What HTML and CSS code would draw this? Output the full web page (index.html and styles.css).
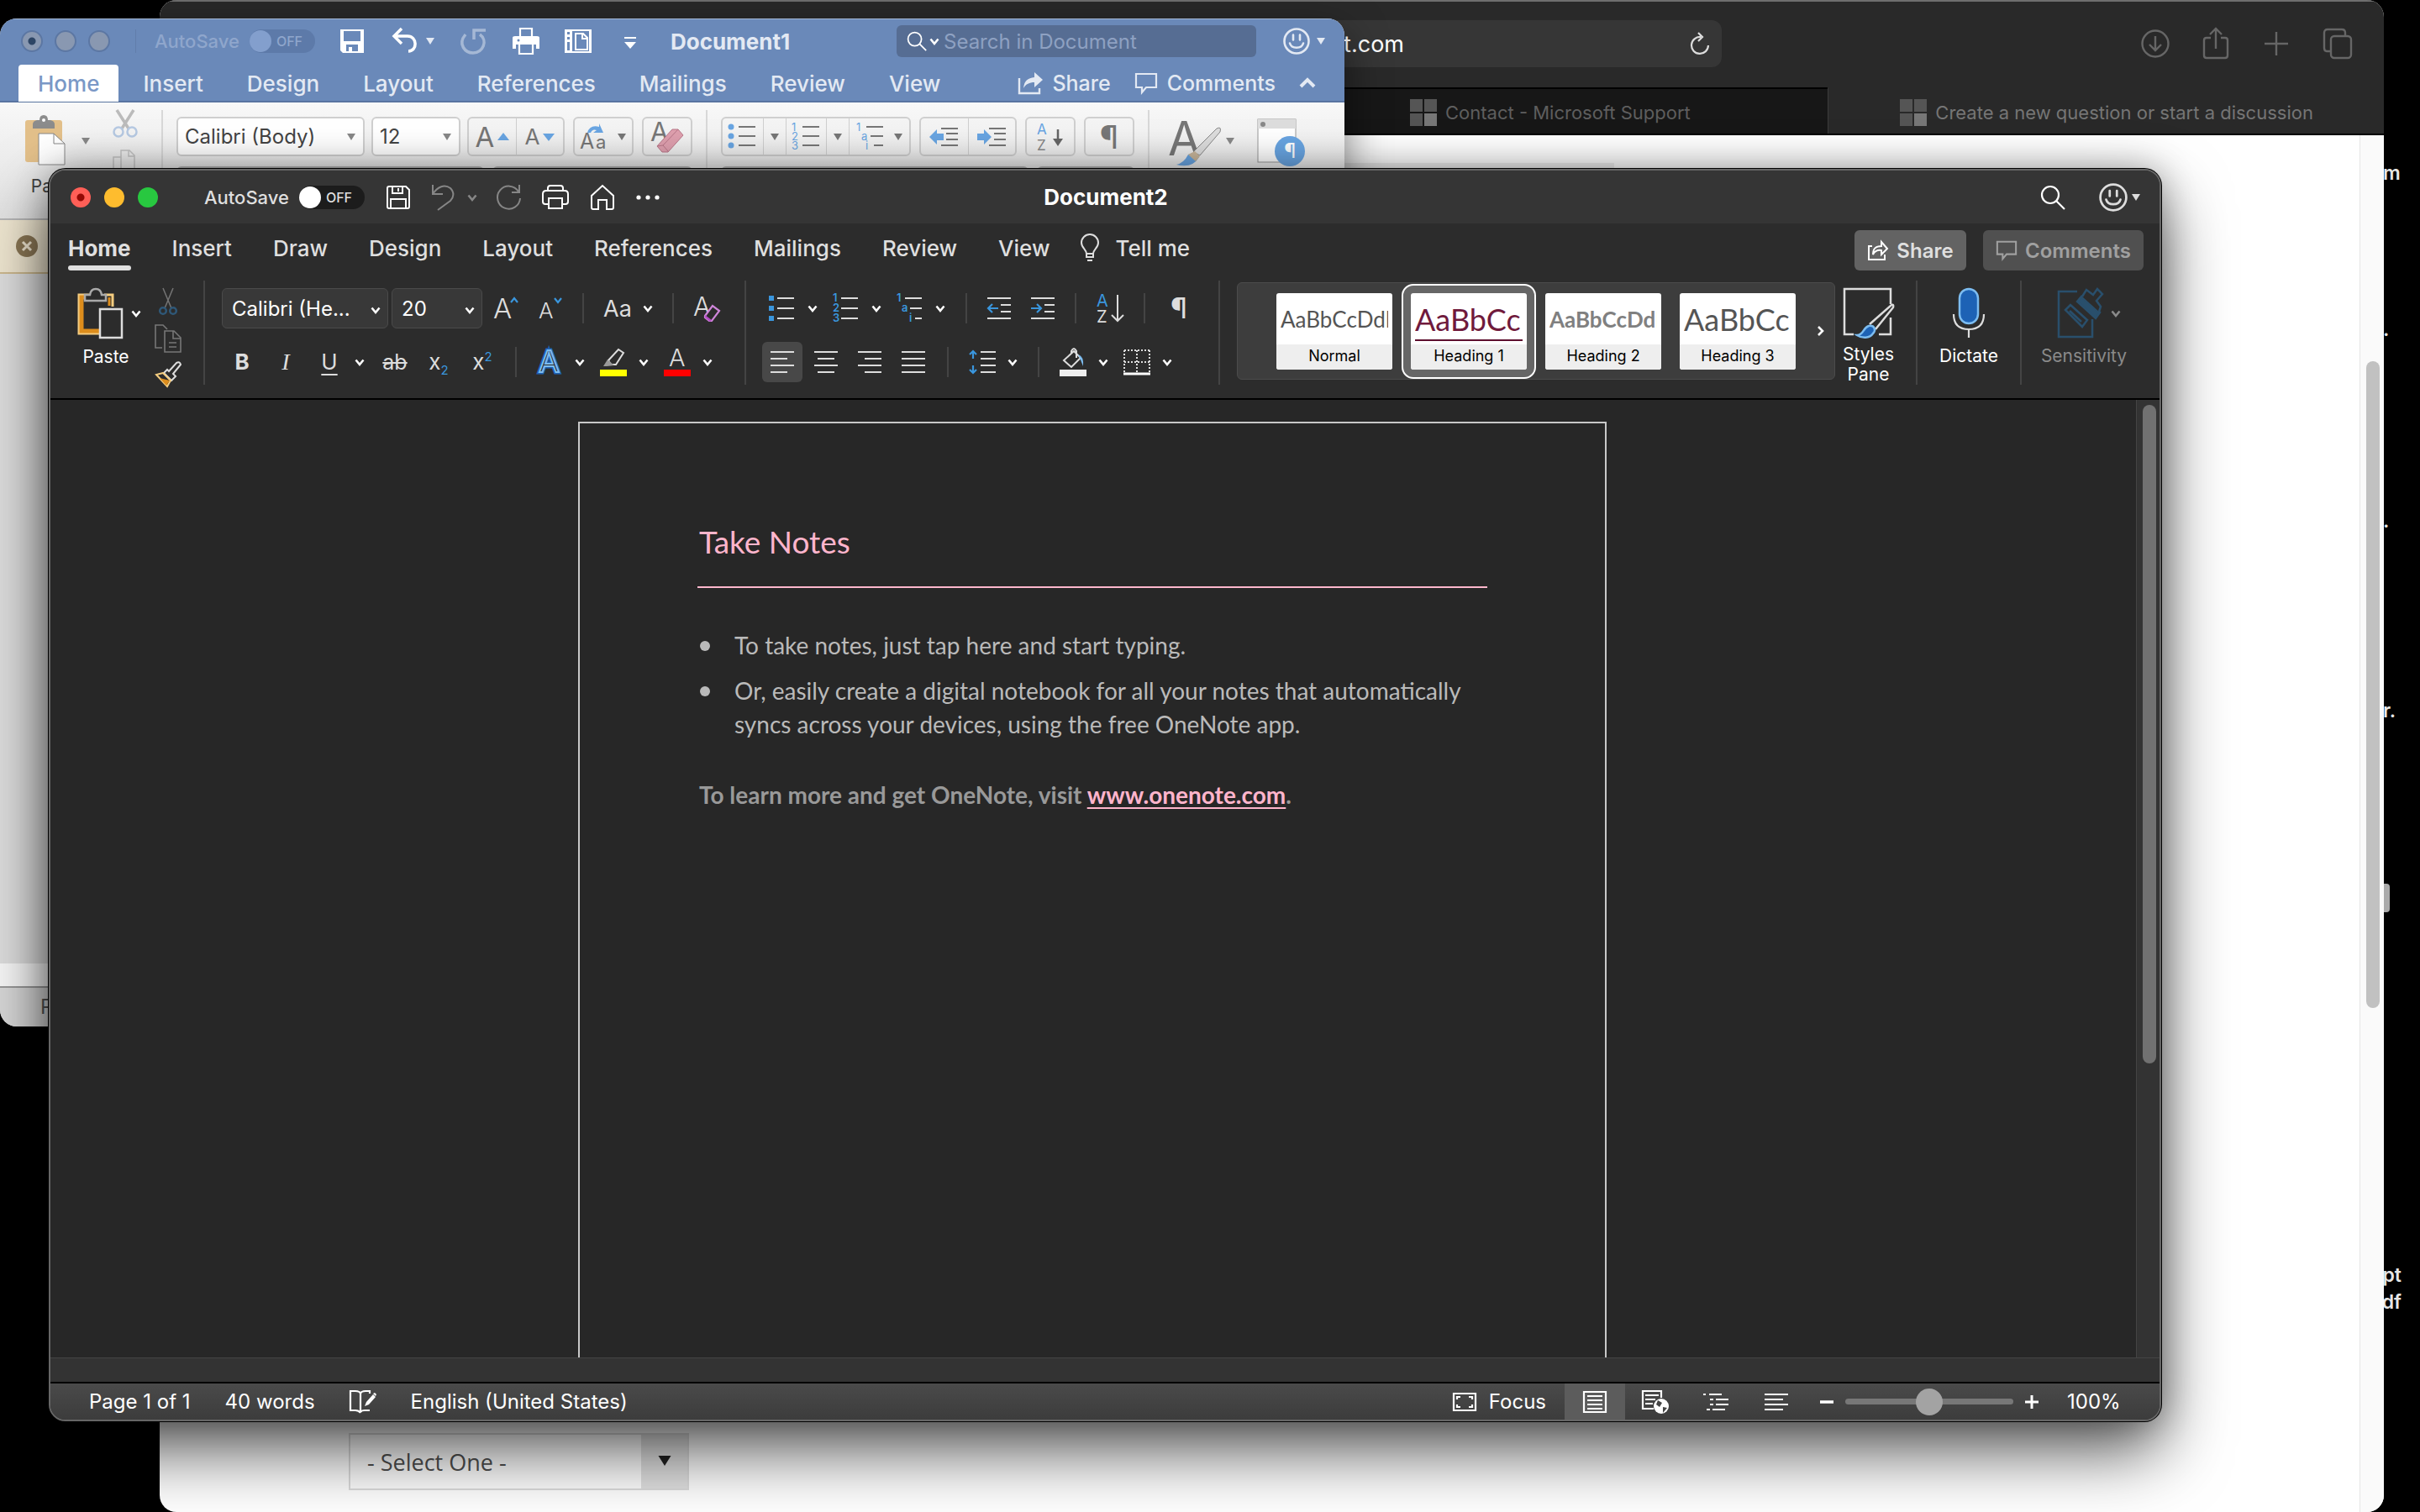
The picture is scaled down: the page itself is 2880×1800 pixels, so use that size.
FILE: index.html
```html
<!DOCTYPE html>
<html lang="en">
<head>
  <meta charset="UTF-8">
  <title>Document2</title>
  <link rel="stylesheet" href="styles.css">
</head>
<body>
  <!-- shared icons -->
  <svg class="sprite">
    <symbol id="chev" viewBox="0 0 12 12"><path d="M1.500 3.500 6 9l4.500-5.500" fill="none" stroke="currentColor" stroke-width="2.600"/></symbol>
    <symbol id="caret" viewBox="0 0 12 12"><path d="M1 2h10L6 10z" fill="currentColor"/></symbol>
    <symbol id="smile" viewBox="0 0 32 32"><g fill="none" stroke="currentColor" stroke-width="2.600"><circle cx="16" cy="16" r="14.500"/><path d="M12 8.500v6M20 8.500v6M8 18.500c2 7 14 7 16 0" stroke-linecap="round"/></g></symbol>
    <symbol id="ms" viewBox="0 0 34 34"><path d="M1 1h15v15H1zM18 1h15v15H18zM1 18h15v15H1z" fill="#555"/><path d="M18 18h15v15H18z" fill="#777"/></symbol>
    <symbol id="search" viewBox="0 0 30 30"><g fill="none" stroke="currentColor" stroke-width="2.200"><circle cx="12" cy="12" r="10"/><path d="m19 19 10 10"/></g></symbol>
    <symbol id="comment" viewBox="0 0 28 28"><path d="M2 3h24v16H14l-5 6v-6H2z" fill="none" stroke="currentColor" stroke-width="2.200"/></symbol>
  </svg>

  <main class="desktop">
    <ul class="files">
      <li class="file f1">m</li>
      <li class="file f2">.</li>
      <li class="file f3">.</li>
      <li class="file f4">r.</li>
      <li class="file f5"></li>
      <li class="file f6">pt<br>df</li>
    </ul>

    <!-- browser window -->
    <section class="window safari">
      <div class="safari-bar">
        <div class="address"><span>microsoft.com</span>
          <button aria-label="Reload"><svg width="24" height="28" viewBox="0 0 24 28"><path d="M13 6a10 10 0 1 0 9 10M10 1l5 5-5 5" fill="none" stroke="#ddd" stroke-width="2.200"/></svg></button>
        </div>
        <div class="safari-tools">
          <button aria-label="Downloads"><svg width="36" height="36" viewBox="0 0 36 36"><g class="ln"><circle cx="18" cy="18" r="15.500"/><path d="M18 9v17M11 19l7 7 7-7"/></g></svg></button>
          <button aria-label="Share page"><svg width="36" height="40" viewBox="0 0 36 40"><g class="ln"><path d="M12 13H7q-3 0-3 3v18q0 3 3 3h22q3 0 3-3V16q0-3-3-3h-5M18 26V3M11 9l7-7 7 7"/></g></svg></button>
          <button aria-label="New tab"><svg width="36" height="36" viewBox="0 0 36 36"><path class="ln" d="M18 4v28M4 18h28"/></svg></button>
          <button aria-label="Show tabs"><svg width="38" height="38" viewBox="0 0 38 38"><g class="ln"><rect x="11" y="10" width="24" height="26" rx="4"/><path d="M10 28H6q-3 0-3-4V6q0-4 4-4h17q4 0 4 4v3"/></g></svg></button>
        </div>
      </div>
      <div class="safari-tabs">
        <div class="stab"></div>
        <div class="stab"></div>
        <div class="stab"><svg width="34" height="34"><use href="#ms"/></svg>Contact - Microsoft Support</div>
        <div class="stab on"><svg width="34" height="34"><use href="#ms"/></svg>Create a new question or start a discussion</div>
      </div>
      <div class="web">
        <div class="web-page">
          <div class="web-strip"></div>
          <div class="web-select">
            <select aria-label="Product"><option>- Select One -</option></select>
            <svg width="18" height="18"><use href="#caret"/></svg>
          </div>
        </div>
        <div class="web-scroll"><div class="thumb"></div></div>
      </div>
    </section>

    <!-- light document window -->
    <section class="window doc1">
      <div class="d1-head">
        <div class="d1-title">
          <div class="lights dim"><i class="dot"></i><i></i><i></i></div>
          <label class="autosave">AutoSave<span class="toggle"><input type="checkbox">OFF</span></label>
          <div class="d1-quick">
            <button aria-label="Save"><svg width="32" height="32" viewBox="0 0 32 32"><path fill-rule="evenodd" fill="#fff" d="M1 2h28v28H4l-3-3zM5 4v12h20V4zM8 20v8h3v-5h4v5h7v-8z"/></svg></button>
            <button class="undo" aria-label="Undo"><svg width="32" height="32" viewBox="0 0 32 32"><path d="M3 10h16c12 0 12 18 1 18M12 1 3 10l9 9" fill="none" stroke="#fff" stroke-width="3.500"/></svg><svg width="12" height="12"><use href="#caret"/></svg></button>
            <button aria-label="Redo" class="faded"><svg width="32" height="32" viewBox="0 0 32 32"><path d="M6 8c-10 12 0 22 9 22 12 0 18-15 8-22M16 14V3h14" fill="none" stroke="#fff" stroke-width="3.500"/></svg></button>
            <button aria-label="Print"><svg width="32" height="32" viewBox="0 0 32 32"><path fill="#fff" d="M0 12q0-2 3-2h26q3 0 3 2v13h-4v-5H4v5H0z"/><path fill="#6a89b9" stroke="#fff" stroke-width="2.200" d="M9 10V1h14v9M8 19h16v12H8z"/><circle cx="7" cy="15" r="1.500" fill="#6a89b9"/></svg></button>
            <button aria-label="Page layout"><svg width="32" height="32" viewBox="0 0 32 32"><path fill-rule="evenodd" fill="#fff" d="M0 2h32v28H0zM9 4v24h20V4z"/><path fill="#6a89b9" d="M3 5h3v3H3zM3 11h3v3H3zM3 17h3v10H3z"/><path fill="none" stroke="#fff" stroke-width="2" d="M13 7h9l5 5v14H13zM21 7v6h6"/></svg></button>
            <button aria-label="Customize toolbar"><svg width="32" height="32" viewBox="0 0 32 32"><path fill="#fff" d="M9 11h14v2H9zM9 17h14l-7 8z"/></svg></button>
          </div>
          <h2>Document1</h2>
          <label class="d1-search"><svg width="24" height="24"><use href="#search"/></svg><svg width="12" height="12"><use href="#chev"/></svg><input type="text" placeholder="Search in Document" aria-label="Search in Document"></label>
          <button class="face" aria-label="Feedback"><svg width="32" height="32"><use href="#smile"/></svg><svg width="12" height="12"><use href="#caret"/></svg></button>
        </div>
        <nav class="d1-tabs">
          <button class="on">Home</button><button>Insert</button><button>Design</button><button>Layout</button><button>References</button><button>Mailings</button><button>Review</button><button>View</button>
          <div class="d1-actions">
            <button><svg width="30" height="28" viewBox="0 0 30 28"><path d="M2 8v18h24v-6" fill="none" stroke="currentColor" stroke-width="2.400"/><path fill="currentColor" d="M7 20c1-9 5-12 13-13V1l10 9-10 9v-6c-6 0-10 2-13 7z"/></svg>Share</button>
            <button><svg width="28" height="28"><use href="#comment"/></svg>Comments</button>
            <button aria-label="Collapse ribbon"><svg width="20" height="20" viewBox="0 0 20 20"><path d="m2 14 8-8 8 8" fill="none" stroke="currentColor" stroke-width="4"/></svg></button>
          </div>
        </nav>
      </div>
      <div class="d1-ribbon">
        <div class="d1-paste">
          <button aria-label="Paste"><svg width="48" height="60" viewBox="0 0 48 60"><rect x="0" y="6" width="44" height="50" rx="3" fill="#e3c08a"/><path fill="#8c8c8c" d="M9 16v-5q0-4 5-5h3q0-6 5-6t5 6h3q5 1 5 5v5z"/><circle cx="22" cy="6" r="2" fill="#fff"/><path d="M16 22h18l13 12v25H16z" fill="#fff" stroke="#888"/><path d="M34 22v12h13" fill="none" stroke="#888"/></svg></button>
          <span>Paste</span>
        </div>
        <svg class="d1-pcaret" width="12" height="12"><use href="#caret"/></svg>
        <div class="d1-clip">
          <svg width="30" height="34" viewBox="0 0 30 34"><path d="M5 1l14 22M25 1 11 23" stroke="#bbb" stroke-width="3.500"/><g fill="none" stroke="#b6c9e2" stroke-width="2.500"><circle cx="7" cy="27" r="5.500"/><circle cx="23" cy="27" r="5.500"/></g></svg>
          <svg width="28" height="32" viewBox="0 0 28 32"><path d="M1 9h9v22H1zM10 1h10l6 6v16H10zM19 1v7h7" fill="none" stroke="#c4c4c4" stroke-width="1.500"/></svg>
        </div>
        <i class="d1-vr"></i>
        <div class="d1-rows">
          <div class="d1-row">
            <div class="d1-combo c-font"><select aria-label="Font"><option>Calibri (Body)</option></select><svg width="12" height="12"><use href="#caret"/></svg></div>
            <div class="d1-combo c-size"><select aria-label="Font size"><option>12</option></select><svg width="12" height="12"><use href="#caret"/></svg></div>
            <div class="d1-set">
              <button aria-label="Increase font size"><span class="big-a">A</span><svg width="14" height="12" viewBox="0 0 14 12"><path d="m7 1 7 9H0z" fill="#69a5e2"/></svg></button>
              <button aria-label="Decrease font size"><span class="small-a">A</span><svg width="14" height="12" viewBox="0 0 14 12"><path d="m7 11 7-9H0z" fill="#69a5e2"/></svg></button>
            </div>
            <div class="d1-set"><button class="w72" aria-label="Change case"><svg width="34" height="34" viewBox="0 0 34 34"><text x="0" y="31" class="glyph" font-size="25">A</text><text x="19" y="31" class="glyph" font-size="22">a</text><path d="M9 12Q12 2 23 5V1l5 11H16l4-3q-5-2-7 3z" fill="#69a5e2"/></svg><svg width="12" height="12"><use href="#caret"/></svg></button></div>
            <div class="d1-set"><button aria-label="Clear formatting"><svg width="42" height="42" viewBox="0 0 42 42"><text x="1" y="26" class="glyph" font-size="31">A</text><path d="M9 32 27 12h7l6 7-18 20h-7z" fill="#dfa0af" stroke="#b97889"/><path d="m9 32 7-1 6 7M16 31l18-19" fill="none" stroke="#b97889"/></svg></button></div>
          </div>
          <div class="d1-row low"><i class="s1"></i><i class="s2"></i></div>
        </div>
        <i class="d1-vr"></i>
        <div class="d1-rows">
          <div class="d1-row">
            <div class="d1-set lists">
              <button aria-label="Bullets"><svg width="36" height="34" viewBox="0 0 36 34"><g fill="#69a5e2"><circle cx="4" cy="5" r="3.500"/><circle cx="4" cy="16" r="3.500"/><circle cx="4" cy="27" r="3.500"/></g><path d="M13 5h20M13 16h20M13 27h20" stroke="#777" stroke-width="2"/></svg></button>
              <button class="nar" aria-label="Bullet options"><svg width="12" height="12"><use href="#caret"/></svg></button>
              <button aria-label="Numbering"><svg width="36" height="34" viewBox="0 0 36 34"><g fill="#69a5e2" font-size="13"><text x="0" y="10">1</text><text x="0" y="21">2</text><text x="0" y="32">3</text></g><path d="M13 5h20M13 16h20M13 27h20" stroke="#777" stroke-width="2"/></svg></button>
              <button class="nar" aria-label="Numbering options"><svg width="12" height="12"><use href="#caret"/></svg></button>
              <button class="multi" aria-label="Multilevel list"><svg width="36" height="34" viewBox="0 0 36 34"><g fill="#69a5e2" font-size="13"><text x="0" y="10">1</text><text x="6" y="21">a</text><text x="11" y="32">i</text></g><path d="M12 5h20M17 16h15M21 27h11" stroke="#777" stroke-width="2"/></svg><svg width="12" height="12"><use href="#caret"/></svg></button>
            </div>
            <div class="d1-set">
              <button aria-label="Decrease indent"><svg width="36" height="28" viewBox="0 0 36 28"><path d="M0 14 9 5v5h8v8H9v5z" fill="#69a5e2"/><path d="M14 4h20M20 10h14M20 17h14M14 24h20" stroke="#777" stroke-width="2"/></svg></button>
              <button aria-label="Increase indent"><svg width="36" height="28" viewBox="0 0 36 28"><path d="M17 14 8 5v5H0v8h8v5z" fill="#69a5e2"/><path d="M14 4h20M20 10h14M20 17h14M14 24h20" stroke="#777" stroke-width="2"/></svg></button>
            </div>
            <div class="d1-set"><button aria-label="Sort"><svg width="34" height="36" viewBox="0 0 34 36"><text x="1" y="15" font-size="17" fill="#69a5e2">A</text><text x="1" y="34" font-size="17" fill="#888">Z</text><path d="M26 9v14" stroke="#666" stroke-width="2.500"/><path d="M20 20h12l-6 9z" fill="#666"/></svg></button></div>
            <div class="d1-set"><button class="pil" aria-label="Show marks">¶</button></div>
          </div>
          <div class="d1-row low"><i class="s3"></i><i class="s4"></i></div>
        </div>
        <i class="d1-vr"></i>
        <button class="d1-big" aria-label="Styles"><svg width="64" height="60" viewBox="0 0 64 60"><text x="0" y="46" class="glyph" font-size="56">A</text><path d="M30 42 58 14q6-3 4 4L38 46z" fill="#ddd" stroke="#888"/><path d="M10 57q9-2 14-12l8-3 5 6q-8 14-27 9z" fill="#69a5e2"/><path d="m24 45 8-4 6 6-5 6z" fill="#c9b79c"/></svg></button>
        <svg class="d1-pcaret" width="12" height="12"><use href="#caret"/></svg>
        <button class="d1-big pane" aria-label="Styles pane"><svg width="60" height="60" viewBox="0 0 60 60"><rect x="1" y="3" width="45" height="51" fill="#fff" stroke="#999"/><path d="M1 3h45v11H1z" fill="#ddd"/><circle cx="7" cy="9" r="3" fill="#888"/><circle cx="39" cy="41" r="18" fill="#69a5e2"/><text x="32" y="49" font-size="24" fill="#fff">¶</text></svg></button>
      </div>
      <div class="d1-note"><button aria-label="Dismiss"><svg width="28" height="28" viewBox="0 0 28 28"><circle cx="14" cy="14" r="13" fill="#8b7755"/><path d="m9 9 10 10M19 9 9 19" stroke="#eee5d0" stroke-width="3"/></svg></button></div>
      <div class="d1-body"></div>
      <div class="d1-hscroll"></div>
      <div class="d1-status">Page 1</div>
    </section>

    <!-- dark document window -->
    <section class="window doc2">
      <header class="titlebar">
        <div class="tb-left">
          <div class="lights"><i class="dot red"></i><i class="yellow"></i><i class="green"></i></div>
          <label class="autosave">AutoSave<span class="toggle"><input type="checkbox">OFF</span></label>
          <button aria-label="Save"><svg width="30" height="30" viewBox="0 0 30 30"><path d="M2 4q0-2 2-2h20l4 4v20q0 2-2 2H4q-2 0-2-2zM8 2v8h12V2M6 28V17h18v11M15 4v4" class="wl"/></svg></button>
          <button class="undo faded" aria-label="Undo"><svg width="30" height="32" viewBox="0 0 30 32"><path d="M2 1v11h12M2 12C8 3 16 0 23 5c5 5 4 11 0 15L8 31" class="wl"/></svg><svg width="12" height="12"><use href="#chev"/></svg></button>
          <button class="faded" aria-label="Redo"><svg width="32" height="32" viewBox="0 0 32 32"><path d="M29 1v9h-9M28 9A13.500 13.500 0 1 0 30 17" class="wl"/></svg></button>
          <button aria-label="Print"><svg width="32" height="32" viewBox="0 0 32 32"><path d="M7 8V5q0-3 3-3h12q3 0 3 3v3M8 24H4q-3 0-3-3v-9q0-4 4-4h22q4 0 4 4v9q0 3-3 3h-4M8 17h16v12H8z" class="wl"/></svg></button>
          <button aria-label="Home page"><svg width="32" height="32" viewBox="0 0 32 32"><path d="M3 14 16 2l13 12v14q0 2-2 2h-6V19H11v11H5q-2 0-2-2z" class="wl"/></svg></button>
          <button aria-label="More"><svg width="28" height="6" viewBox="0 0 28 6"><g fill="#fff"><circle cx="3" cy="3" r="2.600"/><circle cx="14" cy="3" r="2.600"/><circle cx="25" cy="3" r="2.600"/></g></svg></button>
        </div>
        <h1>Document2</h1>
        <div class="tb-right">
          <button aria-label="Search"><svg width="30" height="30"><use href="#search"/></svg></button>
          <button class="face" aria-label="Feedback"><svg width="34" height="34"><use href="#smile"/></svg><svg width="12" height="12"><use href="#caret"/></svg></button>
        </div>
      </header>

      <nav class="tabs">
        <button class="on">Home</button><button>Insert</button><button>Draw</button><button>Design</button><button>Layout</button><button>References</button><button>Mailings</button><button>Review</button><button>View</button>
        <button class="tell"><svg width="24" height="32" viewBox="0 0 24 32"><path d="M8 23c0-5-6-7-6-13a10 10 0 0 1 20 0c0 6-6 8-6 13zM8 23v4h8v-4M9 31h6" fill="none" stroke="currentColor" stroke-width="2"/></svg>Tell me</button>
        <div class="actions">
          <button class="share"><svg width="26" height="26" viewBox="0 0 26 26"><path d="M6 8H2v16h19v-6M7 18c0-8 4-10 10-10V3l7 8-7 7v-5q-7-1-10 5z" class="wl"/></svg>Share</button>
          <button class="comments" disabled><svg width="26" height="28"><use href="#comment"/></svg>Comments</button>
        </div>
      </nav>

      <div class="ribbon">
        <div class="clipboard">
          <button class="paste">
            <span class="paste-icons"><svg width="56" height="62" viewBox="0 0 56 62"><path d="M3 11h10v-2H2v46h26M32 9h10v14" fill="none" stroke="#f5cd80" stroke-width="3"/><path d="M10 12H5v40h21" fill="none" stroke="#dd8d1c" stroke-width="5"/><path d="M38 12v10" stroke="#dd8d1c" stroke-width="3"/><path d="M9 16V9h6q1-7 7-7t7 7h5v7z" fill="#2c2c2c" stroke="#aaa" stroke-width="2.500"/><path d="M27 26h26v34H27z" fill="#2c2c2c" stroke="#ddd" stroke-width="2.500"/></svg><svg width="12" height="12"><use href="#chev"/></svg></span>
            Paste
          </button>
          <div class="clip-small">
            <button aria-label="Cut"><svg width="32" height="34" viewBox="0 0 32 34"><path d="m10 1 10 24M22 1 12 25" stroke="#757575" stroke-width="1.500"/><g fill="none" stroke="#2f5878" stroke-width="2.500"><circle cx="10" cy="28" r="3.800"/><circle cx="22" cy="28" r="3.800"/></g></svg></button>
            <button aria-label="Copy"><svg width="32" height="34" viewBox="0 0 32 34"><path d="M9 28H1V1h9l5 5M12 8h11l8 8v17H12zM22 8v9h9M17 22h9M17 27h9" fill="none" stroke="#777" stroke-width="1.600"/></svg></button>
            <button aria-label="Format painter"><svg width="32" height="32" viewBox="0 0 32 32"><path d="m17 12 9-10q4-2 5 2L22 15l3 3-5 5-9-9 4-4z" fill="none" stroke="#ddd" stroke-width="2"/><path d="M10 14 2 16l13 14 4-7z" fill="none" stroke="#f5cd80" stroke-width="2"/><path d="m6 20 12 3-4 6z" fill="#dd8d1c"/></svg></button>
          </div>
        </div>
        <i class="vr"></i>

        <div class="rows font-group">
          <div class="row">
            <div class="combos">
              <div class="combo c-font"><select aria-label="Font"><option>Calibri (He...</option></select><svg width="12" height="12"><use href="#chev"/></svg></div>
              <div class="combo c-size"><select aria-label="Font size"><option>20</option></select><svg width="12" height="12"><use href="#chev"/></svg></div>
            </div>
            <button aria-label="Increase font size"><svg width="30" height="34" viewBox="0 0 30 34"><path d="m21 10 4-5 4 5" class="bl"/><text x="0" y="29" class="lt" font-size="33">A</text></svg></button>
            <button aria-label="Decrease font size"><svg width="30" height="34" viewBox="0 0 30 34"><path d="m20 5 4 5 4-5" class="bl"/><text x="1" y="29" class="lt" font-size="26">A</text></svg></button>
            <i class="sr"></i>
            <button class="drop" aria-label="Change case"><span class="case">Aa</span><svg width="12" height="12"><use href="#chev"/></svg></button>
            <i class="sr"></i>
            <button aria-label="Clear formatting"><svg width="34" height="36" viewBox="0 0 34 36"><text x="0" y="27" class="lt" font-size="31">A</text><path d="m14 27 9-12 8 6-9 12h-3l-5-4z" fill="#2c2c2c" stroke="#cf86da" stroke-width="2.200"/><path d="m14 26 8 6-2 2-6-5z" fill="#b54bc6"/></svg></button>
          </div>
          <div class="row r2">
            <button class="sq b">B</button>
            <button class="sq i">I</button>
            <button class="drop"><span class="sq u">U</span><svg width="12" height="12"><use href="#chev"/></svg></button>
            <button class="sq s">ab</button>
            <button class="sq script">x<sub>2</sub></button>
            <button class="sq script">x<sup>2</sup></button>
            <i class="sr"></i>
            <div class="colors">
              <button class="drop" aria-label="Text effects"><svg width="32" height="34" viewBox="0 0 32 34"><text x="3" y="29" font-size="36" fill="#2c2c2c" stroke="#1d62b5" stroke-width="5">A</text><text x="3" y="29" font-size="36" fill="#2c2c2c" stroke="#7cbcf0" stroke-width="2">A</text></svg><svg width="12" height="12"><use href="#chev"/></svg></button>
              <button class="drop" aria-label="Highlight"><svg width="32" height="34" viewBox="0 0 32 34"><path d="m10 15 12-13 6 4-9 14h-6z" fill="none" stroke="#ddd" stroke-width="2"/><path d="m9 14 8 7-9 1H4z" fill="#999"/><path d="M0 26h32v8H0z" fill="#ff0"/></svg><svg width="12" height="12"><use href="#chev"/></svg></button>
              <button class="drop" aria-label="Font color"><svg width="32" height="34" viewBox="0 0 32 34"><text x="6" y="22" class="lt" font-size="29">A</text><path d="M0 26h32v8H0z" fill="red"/></svg><svg width="12" height="12"><use href="#chev"/></svg></button>
            </div>
          </div>
        </div>
        <i class="vr"></i>

        <div class="rows para-group">
          <div class="row">
            <div class="colors">
              <button class="drop" aria-label="Bullets"><svg width="32" height="32" viewBox="0 0 32 32"><path d="M0 1h6v6H0zM0 13h6v6H0zM0 25h6v6H0z" fill="#3a96dd"/><path d="M10 4h20M10 16h20M10 28h20" class="gl"/></svg><svg width="12" height="12"><use href="#chev"/></svg></button>
              <button class="drop" aria-label="Numbering"><svg width="32" height="34" viewBox="0 0 32 34"><g class="bt"><text x="0" y="9">1</text><text x="0" y="21">2</text><text x="0" y="33">3</text></g><path d="M10 5h20M10 17h20M10 29h20" class="gl"/></svg><svg width="12" height="12"><use href="#chev"/></svg></button>
              <button class="drop" aria-label="Multilevel list"><svg width="32" height="34" viewBox="0 0 32 34"><g class="bt"><text x="0" y="9">1</text><text x="6" y="21">a</text><text x="15" y="33">i</text></g><path d="M10 5h20M16 17h14M22 29h8" class="gl"/></svg><svg width="12" height="12"><use href="#chev"/></svg></button>
            </div>
            <i class="sr"></i>
            <button aria-label="Decrease indent"><svg width="28" height="28" viewBox="0 0 28 28"><path d="M0 2h28M16 10h12M16 18h12M0 26h28" class="gl"/><path d="M13 14H1M6 9l-5 5 5 5" class="bl"/></svg></button>
            <button aria-label="Increase indent"><svg width="28" height="28" viewBox="0 0 28 28"><path d="M0 2h28M16 10h12M16 18h12M0 26h28" class="gl"/><path d="M0 14h12M7 9l5 5-5 5" class="bl"/></svg></button>
            <i class="sr"></i>
            <button aria-label="Sort"><svg width="32" height="36" viewBox="0 0 32 36"><text x="0" y="16" font-size="20" fill="#3a96dd">A</text><text x="0" y="35" font-size="20" fill="#ddd">Z</text><path d="M25 2v30M18 26l7 7 7-7" fill="none" stroke="#ddd" stroke-width="2"/></svg></button>
            <i class="sr"></i>
            <button class="sq pilcrow">¶</button>
          </div>
          <div class="row">
            <div class="aligns">
              <button class="on" aria-label="Align left"><svg width="28" height="28" viewBox="0 0 28 28"><path d="M0 2h28M0 10h20M0 18h28M0 26h20" class="gl"/></svg></button>
              <button aria-label="Center"><svg width="28" height="28" viewBox="0 0 28 28"><path d="M0 2h28M4 10h20M0 18h28M4 26h20" class="gl"/></svg></button>
              <button aria-label="Align right"><svg width="28" height="28" viewBox="0 0 28 28"><path d="M0 2h28M8 10h20M0 18h28M8 26h20" class="gl"/></svg></button>
              <button aria-label="Justify"><svg width="28" height="28" viewBox="0 0 28 28"><path d="M0 2h28M0 10h28M0 18h28M0 26h28" class="gl"/></svg></button>
            </div>
            <i class="sr"></i>
            <button class="drop" aria-label="Line spacing"><svg width="32" height="30" viewBox="0 0 32 30"><path d="M5 2v9M1 6l4-4 4 4M5 28v-9M1 24l4 4 4-4" class="bl"/><path d="M14 3h18M14 11h18M14 19h18M14 27h18" class="gl"/></svg><svg width="12" height="12"><use href="#chev"/></svg></button>
            <i class="sr"></i>
            <div class="colors">
              <button class="drop" aria-label="Shading"><svg width="32" height="34" viewBox="0 0 32 34"><path d="M17 4 5 15l9 8L25 12zM14 7V4q3-6 6 0v8" fill="none" stroke="#ddd" stroke-width="2"/><path d="M22 8q7 2 6 14l-4-10z" fill="#7cbcf0"/><path d="M0 26h32v8H0z" fill="#eee"/></svg><svg width="12" height="12"><use href="#chev"/></svg></button>
              <button class="drop" aria-label="Borders"><svg width="32" height="32" viewBox="0 0 32 32"><path d="M1 2h30M1 16h30M1 2v26M16 2v26M31 2v26" stroke="#ddd" stroke-width="2" stroke-dasharray="2 2"/><path d="M0 30h32" stroke="#fff" stroke-width="3"/></svg><svg width="12" height="12"><use href="#chev"/></svg></button>
            </div>
          </div>
        </div>
        <i class="vr"></i>

        <div class="gallery">
          <button class="card"><span class="demo">AaBbCcDdI</span><span class="name">Normal</span></button>
          <button class="card h1 on"><span class="demo">AaBbCc</span><span class="name">Heading 1</span></button>
          <button class="card h2"><span class="demo">AaBbCcDdI</span><span class="name">Heading 2</span></button>
          <button class="card h3"><span class="demo">AaBbCc</span><span class="name">Heading 3</span></button>
          <button class="more" aria-label="More styles"><svg width="12" height="14" viewBox="0 0 12 14"><path d="m3 2 5 5-5 5" fill="none" stroke="#fff" stroke-width="2.600"/></svg></button>
        </div>
        <button class="big styles-pane"><svg width="62" height="62" viewBox="0 0 62 62"><path d="M13 56H2V2h55v18M57 36v20H43" fill="none" stroke="#ddd" stroke-width="2.500"/><path d="m32 44 26-23q3-1 2 3L39 50" fill="none" stroke="#ddd" stroke-width="2.500"/><path d="M17 57c8 0 7-9 14-11 7-1 9 5 5 9-4 6-13 6-19 2z" fill="#1d62b5" stroke="#7cbcf0" stroke-width="2.500"/></svg>Styles<br>Pane</button>
        <i class="vr"></i>
        <button class="big dictate"><svg width="40" height="62" viewBox="0 0 40 62"><rect x="9" y="2" width="22" height="41" rx="11" fill="#1d62b5" stroke="#7cbcf0" stroke-width="2.500"/><path d="M2 32q0 18 18 18t18-18M20 50v10" fill="none" stroke="#ddd" stroke-width="2.200"/></svg>Dictate</button>
        <i class="vr"></i>
        <button class="big sensitivity" disabled><span class="sens-icons"><svg width="56" height="62" viewBox="0 0 56 62"><path d="M24 5H2v54h40V38" fill="none" stroke="#294f6c" stroke-width="2.500"/><path d="m10 27 6-6 20 18-6 8zM15 28l14 13" fill="none" stroke="#294f6c" stroke-width="2.500"/><path d="m24 17 5-6 22 19-5 7z" fill="#294f6c" stroke="#294f6c" stroke-width="2.500"/><path d="m30 11 5-8 8 6 5-7 6 6-7 8 5 7-2 6" fill="#2c2c2c" stroke="#294f6c" stroke-width="2.500"/></svg><svg width="12" height="12"><use href="#chev"/></svg></span>Sensitivity</button>
      </div>

      <div class="work">
        <div class="canvas">
          <article class="sheet">
            <h2>Take Notes</h2>
            <ul>
              <li>To take notes, just tap here and start typing.</li>
              <li>Or, easily create a digital notebook for all your notes that automatically syncs across your devices, using the free OneNote app.</li>
            </ul>
            <p>To learn more and get OneNote, visit <a href="#">www.onenote.com</a>.</p>
          </article>
        </div>
        <div class="vscroll"><div class="thumb"></div></div>
      </div>
      <div class="hscroll"></div>

      <footer class="status">
        <span>Page 1 of 1</span>
        <span>40 words</span>
        <button aria-label="Proofing"><svg width="32" height="32" viewBox="0 0 32 32"><path d="M13 29q-2-3-6-3H1V3h6q5 0 6 3v22q1-2 5-2h6M13 6q1-3 6-3h5v3" fill="none" stroke="#fff" stroke-width="2.200"/><path d="m18 21 2-5 8-9 3 3-8 9zM28 6l2-1 2 2-1 2z" fill="#fff"/></svg></button>
        <span>English (United States)</span>
        <div class="views">
          <button class="focus"><svg width="30" height="24" viewBox="0 0 30 24"><path d="M2 2h26v20H2zM6 9V6h4M20 6h4v3M24 15v3h-4M10 18H6v-3" fill="none" stroke="#fff" stroke-width="2.200"/></svg>Focus</button>
          <button class="view on" aria-label="Print layout"><svg width="30" height="28" viewBox="0 0 30 28"><path d="M2 2h26v24H2zM6 7h18M6 12h18M6 17h18M6 22h18" fill="none" stroke="#fff" stroke-width="2.200"/></svg></button>
          <button class="view" aria-label="Web layout"><svg width="34" height="30" viewBox="0 0 34 30"><path d="M15 23H2V2h22v8M5 7h16M5 12h12M5 17h9" fill="none" stroke="#fff" stroke-width="2.200"/><circle cx="24" cy="20" r="9" fill="#fff"/><path d="m20 13 5 3-3 5-4-3zM26 21l5 1-5 6z" fill="#444"/></svg></button>
          <button class="view" aria-label="Outline"><svg width="32" height="24" viewBox="0 0 32 24"><path d="M1 3h3M8 3h15M9 9h4M16 9h15M9 15h4M16 15h15M5 21h4M12 21h15" stroke="#fff" stroke-width="2.200"/></svg></button>
          <button class="view" aria-label="Draft"><svg width="30" height="24" viewBox="0 0 30 24"><path d="M1 3h28M1 9h22M1 15h28M1 21h22" stroke="#fff" stroke-width="2.200"/></svg></button>
          <div class="zoom">
            <button aria-label="Zoom out"><svg width="16" height="16" viewBox="0 0 16 16"><path d="M0 8h16" stroke="#fff" stroke-width="3.500"/></svg></button>
            <input type="range" min="0" max="100" value="50" aria-label="Zoom">
            <button aria-label="Zoom in"><svg width="16" height="16" viewBox="0 0 16 16"><path d="M0 8h16M8 0v16" stroke="#fff" stroke-width="3"/></svg></button>
          </div>
          <span class="pct">100%</span>
        </div>
      </footer>
    </section>
  </main>
</body>
</html>
```
FILE: styles.css
```css
* {
  box-sizing: border-box;
}
body {
  margin: 0;
  background: #000;
  font-family: Inter, "Liberation Sans", sans-serif;
}
button, select, input {
  font: inherit;
  color: inherit;
  background: none;
  border: none;
  padding: 0;
  margin: 0;
  border-radius: 0;
}
button {
  display: flex;
  align-items: center;
  justify-content: center;
}
select {
  appearance: none;
}
svg {
  display: block;
  flex: none;
  overflow: visible;
}
h1, h2, p, ul {
  margin: 0;
  padding: 0;
}
.sprite {
  display: none;
}
.desktop {
  position: relative;
  height: 100vh;
  overflow: hidden;
}
.window {
  position: absolute;
  display: flex;
  flex-direction: column;
  overflow: hidden;
}
.faded {
  opacity: 0.4;
}

/* desktop file names */
.files {
  list-style: none;
}
.file {
  position: absolute;
  right: 22px;
  width: 22px;
  color: #e6e6e6;
  font-size: 23px;
  font-weight: 600;
  line-height: 32px;
}
.f1 { top: 190px; }
.f2 { top: 376px; }
.f3 { top: 604px; }
.f4 { top: 830px; }
.f5 {
  top: 1052px;
  right: 36px;
  height: 34px;
  background: #aaa;
  border-radius: 4px;
}
.f6 {
  top: 1502px;
  width: 28px;
  text-align: right;
}

/* browser */
.safari {
  left: 190px;
  right: 43px;
  top: 0;
  bottom: 0;
  border-radius: 20px;
  background: #fff;
}
.safari-bar {
  display: flex;
  justify-content: flex-end;
  height: 104px;
  padding: 24px 36px 0 0;
  background: #292929;
  border-top: 2px solid #6e6e6e;
}
.address {
  display: flex;
  align-items: center;
  justify-content: flex-end;
  gap: 340px;
  width: 1070px;
  height: 56px;
  margin: -2px auto 0 789px;
  padding-right: 14px;
  border-radius: 12px;
  background: #363636;
  color: #fff;
  font-size: 27px;
}
.safari-tools {
  display: flex;
  gap: 36px;
  height: 52px;
  align-items: center;
}
.ln {
  fill: none;
  stroke: #666;
  stroke-width: 2.4;
}
.safari-tabs {
  display: grid;
  grid-template-columns: repeat(4, 1fr);
  height: 57px;
  background: #171717;
  border-bottom: 2px solid #000;
}
.stab {
  display: flex;
  align-items: center;
  justify-content: center;
  gap: 9px;
  border-top: 2px solid #000;
  color: #5e5e5e;
  font-size: 22px;
  padding-top: 2px;
  white-space: nowrap;
}
.stab.on {
  background: #292929;
  border-top-color: #292929;
  border-left: 1px solid #3c3c3c;
  color: #757575;
}
.web {
  flex: 1;
  display: flex;
}
.web-page {
  flex: 1;
  display: flex;
  flex-direction: column;
  justify-content: space-between;
  padding: 33px 0 26px 225px;
}
.web-strip {
  width: 1506px;
  height: 40px;
  background: #eee;
}
.web-select {
  position: relative;
  width: 405px;
  height: 68px;
}
.web-select select {
  width: 100%;
  height: 100%;
  padding-left: 20px;
  border: 2px solid #ddd;
  background: linear-gradient(90deg, transparent 346px, #e2e2e2 346px);
  font-family: "Open Sans", sans-serif;
  font-size: 27px;
  color: #505050;
}
.web-select svg {
  position: absolute;
  right: 20px;
  top: 24px;
  color: #222;
}
.web-scroll {
  width: 29px;
  padding: 269px 5px 0 7px;
  background: #fafafa;
  border-left: 1px solid #e5e5e5;
}
.web-scroll .thumb {
  height: 770px;
  border-radius: 8px;
  background: #c1c1c1;
}

/* traffic lights and autosave, both document windows */
.lights {
  display: flex;
  gap: 16px;
}
.lights i {
  width: 24px;
  height: 24px;
  border-radius: 50%;
}
.lights .red {
  background: radial-gradient(circle, #930a05 4px, #ff5f57 5px);
}
.lights .yellow { background: #febc2e; }
.lights .green { background: #28c840; }
.lights.dim {
  gap: 14px;
}
.lights.dim i {
  width: 26px;
  height: 26px;
  background: #8998b1;
  border: 2px solid #5c77a3;
}
.lights.dim .dot {
  background: radial-gradient(circle, #2d4565 4px, #8998b1 5px);
}
.autosave {
  display: flex;
  align-items: center;
  gap: 12px;
  font-size: 22px;
  font-weight: 500;
}
.toggle {
  display: flex;
  align-items: center;
  gap: 6px;
  width: 78px;
  height: 28px;
  border-radius: 14px;
  background: #1c1c1c;
  font-size: 16px;
}
.toggle input {
  appearance: none;
  width: 26px;
  height: 26px;
  border-radius: 50%;
  background: #fff;
}

/* light document window */
.doc1 {
  left: 0;
  right: 1280px;
  top: 22px;
  height: 1200px;
  border-radius: 20px;
  background: #e4e4e4;
  box-shadow: 0 20px 50px rgba(0, 0, 0, 0.5);
}
.d1-head {
  background: #6a89b9;
  border-top: 1px solid #a3b8d6;
  color: #e3e9f3;
  height: 100px;
}
.d1-title {
  display: flex;
  align-items: center;
  height: 52px;
  padding: 0 22px 0 25px;
}
.d1-title .autosave {
  margin-left: 30px;
  padding-left: 22px;
  border-left: 1px solid #617dab;
  color: #8fa6cc;
}
.d1-title .toggle {
  background: #5d7aa9;
}
.d1-title .toggle input {
  background: #839fcd;
}
.d1-quick {
  display: flex;
  align-items: center;
  gap: 30px;
  margin-left: 29px;
}
.d1-quick .undo {
  gap: 8px;
}
.d1-title h2 {
  margin-left: 32px;
  font-size: 26px;
  font-weight: 700;
}
.d1-search {
  display: flex;
  align-items: center;
  gap: 3px;
  width: 428px;
  height: 38px;
  margin-left: auto;
  padding-left: 12px;
  border-radius: 6px;
  background: #566d93;
  color: #fff;
  font-size: 24px;
}
.d1-search input {
  flex: 1;
  min-width: 0;
  padding-left: 2px;
}
.d1-search input::placeholder {
  color: #8ea1c2;
}
.face {
  gap: 7px;
}
.d1-title .face {
  margin-left: 32px;
}
.d1-tabs {
  display: flex;
  align-items: center;
  gap: 6px;
  height: 47px;
  padding: 3px 34px 0 22px;
  border-bottom: 2px solid #5874a0;
  font-size: 26px;
  font-weight: 500;
}
.d1-tabs > button {
  height: 44px;
  padding: 0 23px;
}
.d1-tabs > .on {
  background: #fff;
  color: #7a98c6;
  border-radius: 4px 4px 0 0;
}
.d1-actions {
  display: flex;
  gap: 28px;
  margin-left: auto;
  font-size: 25px;
}
.d1-actions button {
  gap: 11px;
}
.d1-ribbon {
  display: flex;
  height: 140px;
  padding: 0 30px;
  background: linear-gradient(#f8f8f8, #e2e2e2);
  border-bottom: 2px solid #b5b5b5;
  color: #777;
}
.d1-paste {
  display: flex;
  flex-direction: column;
  align-items: flex-end;
  gap: 12px;
  width: 62px;
  padding-top: 15px;
  color: #444;
  font-size: 21px;
}
.d1-paste button {
  align-self: flex-start;
}
.d1-pcaret {
  margin: 40px 0 0 4px;
  color: #888;
}
.d1-clip {
  display: flex;
  flex-direction: column;
  gap: 14px;
  width: 84px;
  padding: 8px 0 0 26px;
}
.d1-vr {
  width: 2px;
  height: 124px;
  margin-top: 9px;
  background: #d8d8d8;
}
.d1-rows {
  margin: 17px 16px 0;
}
.d1-row {
  display: flex;
  gap: 10px;
}
.d1-row.low {
  margin-top: 12px;
}
.low i {
  height: 46px;
  border: 2px solid #b4b4b4;
  border-radius: 6px;
}
.s1, .s3 { width: 366px; }
.s2, .s4 { flex: 1; }
.d1-combo {
  position: relative;
  height: 47px;
  border: 2px solid #cfcfcf;
  border-radius: 6px;
  background: #fff;
  color: #444;
  font-size: 24px;
}
.d1-combo.c-font { width: 224px; }
.d1-combo.c-size {
  width: 106px;
  margin: 0 -2px;
}
.d1-combo select {
  width: 100%;
  height: 100%;
  padding-left: 8px;
}
.d1-combo svg {
  position: absolute;
  right: 8px;
  top: 16px;
  color: #888;
}
.d1-set {
  display: flex;
  height: 47px;
  border: 2px solid #cfcfcf;
  border-radius: 6px;
}
.d1-set button {
  width: 56px;
  gap: 4px;
}
.d1-set button + button {
  border-left: 1px solid #cfcfcf;
}
.d1-set .w72 {
  width: 68px;
  gap: 10px;
}
.lists button {
  width: 48px;
}
.lists .nar {
  width: 27px;
}
.lists .multi {
  width: 72px;
  gap: 8px;
}
.glyph {
  fill: #777;
}
.big-a {
  font-size: 33px;
}
.small-a {
  font-size: 26px;
}
.d1-set .pil {
  font-size: 38px;
}
.d1-big {
  align-self: flex-start;
  margin: 17px 0 0 22px;
}
.d1-big + .d1-pcaret {
  margin-left: 4px;
}
.d1-big.pane {
  margin-left: 26px;
}
.d1-note {
  height: 64px;
  padding: 17px 18px;
  background: #efe6d0;
  border-bottom: 2px solid #cdb98f;
}
.d1-body {
  flex: 1;
  background: #dedede;
}
.d1-hscroll {
  height: 29px;
  background: #f8f8f8;
  border-bottom: 2px solid #999;
}
.d1-status {
  height: 46px;
  padding-left: 48px;
  background: #d8d8d8;
  color: #555;
  font-size: 24px;
  line-height: 46px;
}

/* dark document window */
.doc2 {
  left: 58px;
  right: 308px;
  top: 201px;
  bottom: 108px;
  border: 2px solid #666;
  border-radius: 20px;
  background: #2c2c2c;
  color: #fff;
  box-shadow: 0 0 0 1px #000, 0 36px 80px rgba(0, 0, 0, 0.65), 0 0 40px rgba(0, 0, 0, 0.3);
}
.wl {
  fill: none;
  stroke: #fff;
  stroke-width: 2;
}
.gl {
  fill: none;
  stroke: #ddd;
  stroke-width: 2;
}
.bl {
  fill: none;
  stroke: #3a96dd;
  stroke-width: 2.2;
}
.bt {
  fill: #3a96dd;
  font-size: 13px;
  font-weight: 600;
}
.lt {
  fill: #ddd;
  font-weight: 300;
}
.titlebar {
  display: grid;
  grid-template-columns: 1fr auto 1fr;
  align-items: center;
  height: 63px;
  padding: 0 22px 0 24px;
  background: #353535;
}
.tb-left, .tb-right {
  display: flex;
  align-items: center;
}
.tb-left {
  gap: 24px;
}
.tb-left .autosave {
  margin: 0 1px 0 31px;
  color: #dfdfdf;
}
.tb-left .undo {
  gap: 13px;
}
.tb-left .faded + .faded {
  margin-left: -3px;
}
.tb-right {
  justify-content: flex-end;
  gap: 40px;
}
.titlebar h1 {
  font-size: 26px;
  font-weight: 700;
}
.titlebar .face {
  gap: 4px;
  color: #ddd;
}
.tabs {
  display: flex;
  gap: 49px;
  height: 68px;
  padding: 0 19px 0 21px;
  color: #dfdfdf;
  font-size: 26px;
  font-weight: 500;
}
.tabs > button {
  position: relative;
  height: 58px;
}
.tabs > .on {
  font-weight: 700;
}
.tabs > .on::after {
  content: "";
  position: absolute;
  left: 0;
  right: 0;
  bottom: 2px;
  height: 6px;
  border-radius: 3px;
  background: #dfdfdf;
}
.tabs .tell {
  gap: 18px;
  margin-left: -13px;
}
.actions {
  display: flex;
  gap: 20px;
  margin: 8px 0 0 auto;
  font-size: 24px;
  font-weight: 600;
}
.actions button {
  gap: 9px;
  height: 48px;
  border-radius: 6px;
  background: #636363;
}
.actions .share {
  width: 133px;
}
.actions .comments {
  width: 191px;
  background: #505050;
  color: #a0a0a0;
}

.ribbon {
  display: flex;
  height: 142px;
  border-bottom: 2px solid #000;
}
.vr {
  width: 2px;
  height: 124px;
  background: #444;
}
.sr {
  width: 2px;
  height: 36px;
  background: #444;
}
.clipboard {
  display: flex;
  gap: 16px;
  width: 182px;
  padding: 8px 0 0 24px;
  font-size: 21px;
}
.paste {
  flex-direction: column;
  justify-content: flex-start;
  gap: 8px;
  width: 84px;
}
.paste-icons, .sens-icons {
  display: flex;
  align-items: center;
  align-self: flex-end;
  gap: 8px;
}
.clip-small {
  display: flex;
  flex-direction: column;
  gap: 10px;
}
.rows {
  display: flex;
  flex-direction: column;
  gap: 16px;
  padding-top: 9px;
}
.row {
  display: flex;
  align-items: center;
  height: 48px;
}
.font-group {
  width: 642px;
  padding-left: 20px;
}
.font-group .row {
  gap: 23px;
}
.font-group .r2 {
  gap: 20px;
  padding-left: 8px;
}
.r2 .sr {
  margin: 0 3px;
}
.combos {
  display: flex;
  gap: 4px;
  margin-right: -10px;
}
.combo {
  position: relative;
  height: 48px;
  border: 1px solid #4a4a4a;
  border-radius: 6px;
  background: #383838;
  font-size: 24px;
}
.combo.c-font { width: 198px; }
.combo.c-size { width: 108px; }
.combo select {
  width: 100%;
  height: 100%;
  padding-left: 11px;
}
.combo svg {
  position: absolute;
  right: 8px;
  top: 19px;
}
.drop {
  gap: 14px;
}
.case {
  width: 33px;
  color: #ddd;
  font-size: 27px;
}
.sq {
  width: 32px;
  color: #ddd;
  font-size: 26px;
  line-height: 32px;
  text-align: center;
}
.sq.b { font-weight: 700; }
.sq.i {
  font-family: "Liberation Serif", serif;
  font-style: italic;
  font-size: 28px;
}
.sq.u {
  text-decoration: underline;
  text-underline-offset: 5px;
}
.sq.s {
  text-decoration: line-through;
  font-size: 25px;
}
.sq.script {
  display: block;
}
.sq sub, .sq sup {
  color: #3a96dd;
  font-size: 15px;
  line-height: 0;
}
.sq.pilcrow {
  font-size: 34px;
}
.colors {
  display: flex;
  gap: 18px;
}
.para-group {
  width: 562px;
  padding-left: 27px;
}
.para-group .row {
  gap: 24px;
}
.aligns {
  display: flex;
  gap: 4px;
  margin: 0 -8px;
}
.aligns button {
  width: 48px;
  height: 48px;
  border-radius: 6px;
}
.aligns .on {
  background: #484848;
}
.gallery {
  flex: 1;
  display: flex;
  align-items: center;
  gap: 22px;
  height: 116px;
  margin: 2px 0 0 20px;
  padding-left: 46px;
  border: 1px solid #4c4c4c;
  border-radius: 6px;
  background: #3d3d3d;
}
.card {
  flex-direction: column;
  width: 138px;
  height: 91px;
  overflow: hidden;
  border-radius: 3px;
  background: #fff;
  color: #555;
  font-family: Lato, sans-serif;
}
.card.on {
  outline: 2px solid #fff;
  box-shadow: 0 0 0 9px #666;
  outline-offset: 9px;
}
.demo {
  width: 128px;
  height: 61px;
  overflow: hidden;
  font-size: 26px;
  line-height: 62px;
  text-align: left;
  white-space: nowrap;
}
.name {
  width: 100%;
  height: 30px;
  background: #eee;
  color: #000;
  font-family: Inter, sans-serif;
  font-size: 18px;
  line-height: 28px;
}
.h1 .demo {
  height: 57px;
  margin-bottom: 4px;
  border-bottom: 2px solid #5d0f2e;
  color: #701a3c;
}
.h1 .demo, .h3 .demo {
  font-size: 36px;
}
.h2 .demo {
  color: #808080;
  font-weight: 700;
}
.more {
  margin-left: 2px;
}
.big {
  flex-direction: column;
  justify-content: flex-start;
  gap: 8px;
  padding-top: 8px;
  font-size: 21px;
  line-height: 24px;
}
.styles-pane {
  width: 96px;
  padding-right: 17px;
  gap: 6px;
}
.dictate {
  width: 122px;
}
.sensitivity {
  width: 164px;
  padding-right: 16px;
  color: #8a8a8a;
}
.sens-icons {
  align-self: center;
  margin-left: 12px;
}

.work {
  flex: 1;
  display: flex;
  min-height: 0;
  background: #272727;
}
.canvas {
  flex: 1;
  display: flex;
  justify-content: center;
  padding: 26px 2px 0 0;
}
.sheet {
  width: 1224px;
  padding: 117px 140px 0;
  border: 2px solid #c8c8c8;
  border-bottom: none;
  color: #bababa;
  font-family: Lato, sans-serif;
  font-size: 28px;
  line-height: 40px;
}
.sheet h2 {
  padding: 0 0 29px 2px;
  border-bottom: 2px solid #ffb8cd;
  color: #ffb5cc;
  font-size: 37px;
  font-weight: 400;
  line-height: 48px;
}
.sheet ul {
  padding: 48px 0 44px 44px;
}
.sheet li + li {
  margin-top: 14px;
}
.sheet li {
  list-style: none;
  position: relative;
}
.sheet li::before {
  content: "";
  position: absolute;
  left: -41px;
  top: 15px;
  width: 12px;
  height: 12px;
  border-radius: 50%;
  background: #bababa;
}
.sheet p {
  padding-left: 2px;
  color: #999;
  font-weight: 700;
}
.sheet a {
  color: #ffb5cc;
  text-underline-offset: 4px;
  text-decoration-thickness: 2px;
}
.vscroll {
  width: 28px;
  padding: 6px 4px 0 7px;
  background: #333;
  border-left: 1px solid #444;
}
.vscroll .thumb {
  height: 784px;
  border-radius: 8px;
  background: #717171;
}
.hscroll {
  height: 31px;
  background: #333;
  border-top: 1px solid #444;
  border-bottom: 2px solid #000;
}
.status {
  display: flex;
  align-items: center;
  gap: 41px;
  height: 43px;
  padding-left: 46px;
  background: linear-gradient(#4a4a4a, #3c3c3c);
  font-size: 24px;
}
.views {
  display: flex;
  align-items: center;
  height: 100%;
  margin-left: auto;
}
.focus {
  gap: 14px;
  margin-right: 22px;
}
.view {
  width: 72px;
  height: 100%;
}
.view.on {
  background: #5c5c5c;
}
.zoom {
  display: flex;
  align-items: center;
  gap: 14px;
  margin-left: 16px;
}
.zoom input {
  appearance: none;
  width: 200px;
  height: 7px;
  border-radius: 4px;
  background: #777;
}
.zoom input::-webkit-slider-thumb {
  appearance: none;
  width: 32px;
  height: 32px;
  border-radius: 50%;
  background: #a3a3a3;
}
.pct {
  width: 110px;
  margin-left: 34px;
}
```
